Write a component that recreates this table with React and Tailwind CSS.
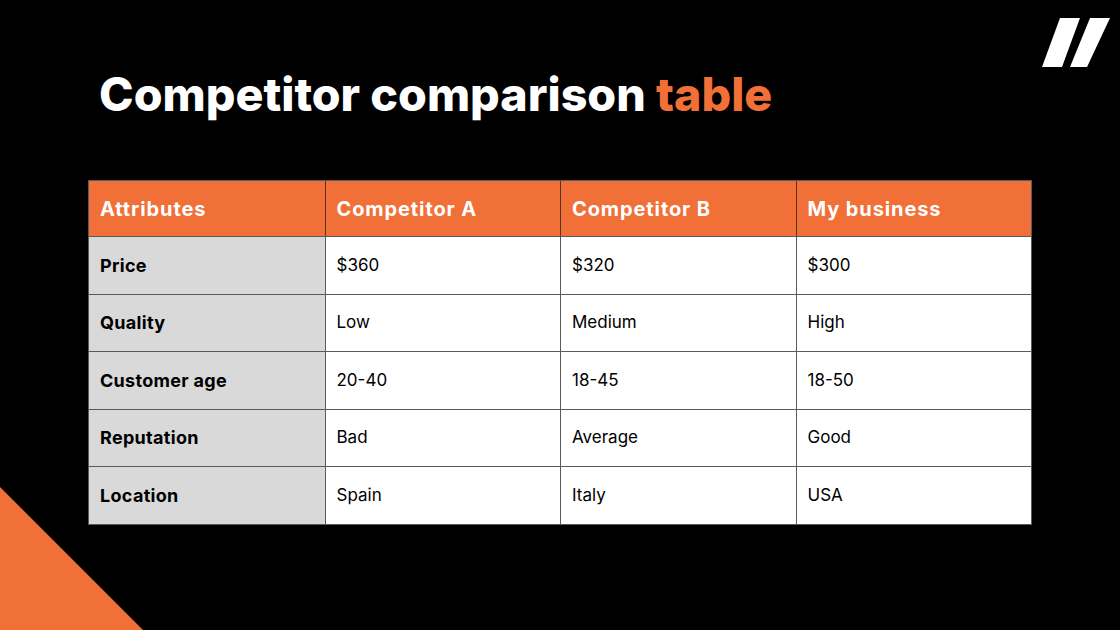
const headers = ['Attributes', 'Competitor A', 'Competitor B', 'My business']

const rows = [
  ['Price', '$360', '$320', '$300'],
  ['Quality', 'Low', 'Medium', 'High'],
  ['Customer age', '20-40', '18-45', '18-50'],
  ['Reputation', 'Bad', 'Average', 'Good'],
  ['Location', 'Spain', 'Italy', 'USA'],
]

function Slashes() {
  return (
    <svg width="72" height="52" viewBox="0 0 72 52" className="absolute right-[8px] top-[17px]">
      <polygon points="20,1 40,1 22,50 2,50" fill="#fff" />
      <polygon points="50,1 70,1 47,50 30,50" fill="#fff" />
    </svg>
  )
}

export default function App() {
  return (
    <div
      className="relative h-[630px] w-[1120px] overflow-hidden bg-black"
      style={{ fontFamily: 'Inter, "Open Sans", sans-serif' }}
    >
      <Slashes />
      {/* orange corner */}
      <div className="absolute bottom-0 left-0 h-[143px] w-[143px] bg-[#f07038] [clip-path:polygon(0_0,100%_100%,0_100%)]" />

      <div className="pl-[99px] pt-[66px]">
        <h1 className="text-[46.6px] font-extrabold leading-[56px] text-white">
          Competitor comparison <span className="text-[#f07038]">table</span>
        </h1>
      </div>

      <div className="ml-[88px] mt-[58px] w-[944px]">
        <div className="grid grid-cols-4 border border-[#5a5a5a] bg-[#f07038]">
          {headers.map((h, i) => (
            <div
              key={h}
              className={`flex h-[55px] items-center pl-[11px] text-[20px] font-bold tracking-[0.9px] text-white ${i > 0 ? 'border-l border-[#5a3020]' : ''}`}
            >
              {h}
            </div>
          ))}
        </div>
        {rows.map((r) => (
          <div key={r[0]} className="grid grid-cols-4 border-x border-b border-[#5a5a5a]">
            {r.map((c, i) => (
              <div
                key={i}
                className={`flex h-[56.5px] items-center pl-[11px] text-black ${
                  i === 0
                    ? 'bg-[#d9d9d9] text-[18px] font-bold tracking-[0.3px]'
                    : 'border-l border-[#5a5a5a] bg-white text-[17px]'
                }`}
              >
                {c}
              </div>
            ))}
          </div>
        ))}
      </div>
    </div>
  )
}
